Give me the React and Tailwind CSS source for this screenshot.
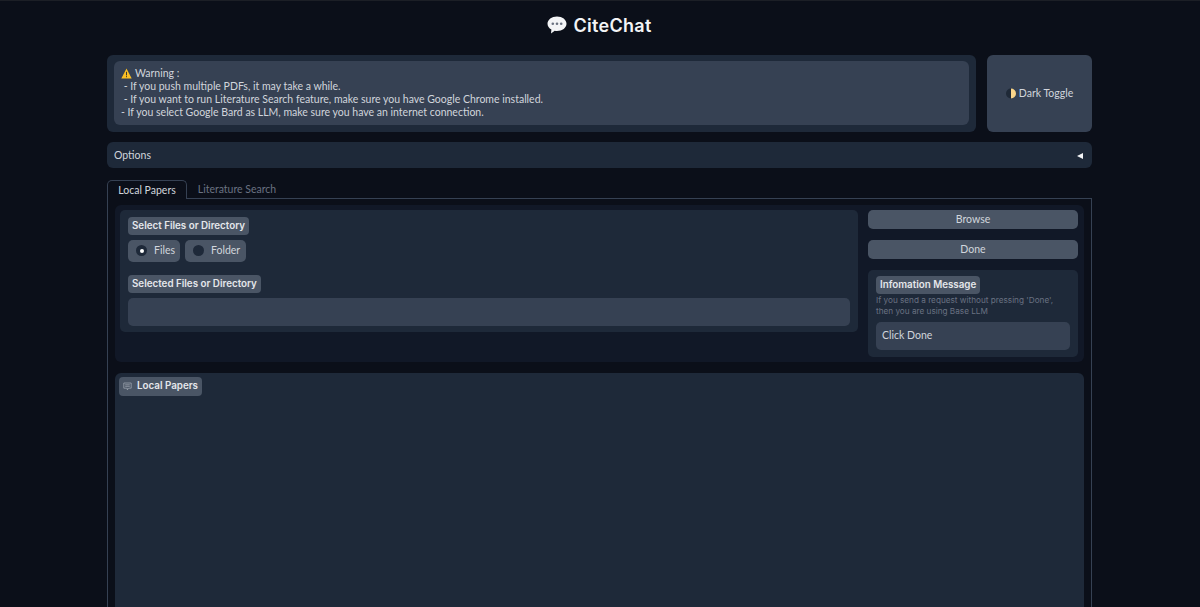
import React from 'react';

const BODY = "font-['Lato','Liberation_Sans',sans-serif]";
const HEAD = "font-['Inter','Liberation_Sans',sans-serif]";

const Balloon = () => (
  <svg width="20" height="18" viewBox="0 0 20 18">
    <path d="M10 .5c5.300 0 9.500 3.200 9.500 7.300s-4.200 7.200-9.500 7.200c-.8 0-1.600-.1-2.300-.2L4 17.500l.4-3.900C2 12.300.5 10.200.5 7.800.5 3.700 4.700.5 10 .5z" fill="#f3f4f6" />
    <circle cx="5.800" cy="7.800" r="1.300" fill="#6b7280" />
    <circle cx="10" cy="7.800" r="1.300" fill="#6b7280" />
    <circle cx="14.200" cy="7.800" r="1.300" fill="#6b7280" />
  </svg>
);

const WarnIcon = () => (
  <svg width="11" height="11" viewBox="0 0 11 11" className="shrink-0">
    <path d="M5.500.5l5.200 10H.3z" fill="#fbbf24" />
    <rect x="5" y="3.800" width="1" height="3.600" fill="#3f3a2a" />
    <rect x="5" y="8.100" width="1" height="1.100" fill="#3f3a2a" />
  </svg>
);

const MoonIcon = () => (
  <svg width="10" height="11" viewBox="0 0 10 11" className="shrink-0">
    <circle cx="5" cy="5.500" r="5" fill="#1f2937" />
    <path d="M5 .5a5 5 0 0 1 0 10z" fill="#fcd68a" />
  </svg>
);

const ChatIcon = () => (
  <svg width="9" height="9" viewBox="0 0 9 9" fill="none" stroke="#9ca3af" strokeWidth="0.800">
    <path d="M.8 1h7.400v5.200H5.500L4.300 8V6.200H.8z" />
    <path d="M2.200 2.800h4.600M2.200 4.300h4.600" />
  </svg>
);

const Label = ({ children, className = '' }) => (
  <div className={`flex w-fit items-center h-[18px] px-[4px] rounded-[4px] bg-gray-600 text-[9.8px] font-semibold text-gray-200 whitespace-nowrap ${HEAD} ${className}`}>
    {children}
  </div>
);

const Radio = ({ label, checked, width }) => (
  <div className={`flex items-center gap-[7px] h-[22px] pl-[8px] pb-px rounded-[5px] bg-gray-600 text-[10.5px] text-gray-300 ${width}`}>
    <span className="w-[11px] h-[11px] rounded-full bg-gray-800 flex items-center justify-center">
      {checked && <span className="w-[4px] h-[4px] rounded-full bg-white" />}
    </span>
    {label}
  </div>
);

const App = () => {
  return (
    <div className={`h-[607px] overflow-hidden bg-[#0b0f19] border-t border-[#1c1f26] ${BODY}`}>
      <div className="w-[985px] ml-[107px]">
        <h1 className={`h-[54px] flex items-center justify-center gap-[6px] text-[18px] font-semibold tracking-[0.3px] text-gray-100 pb-[6px] ${HEAD}`}>
          <Balloon /> CiteChat
        </h1>

        <div className="flex gap-[11px] h-[77px]">
          <div className="flex-1 rounded-[6px] bg-gray-800 pt-[6px] px-[7px] pb-[7px]">
            <div className="h-full rounded-[6px] bg-gray-700 px-[7px] py-[6px] text-[10.5px] leading-[13px] text-gray-300 whitespace-pre">
              <div className="flex items-center gap-[3px]"><WarnIcon />Warning :</div>
              <div> - If you push multiple PDFs, it may take a while.</div>
              <div> - If you want to run Literature Search feature, make sure you have Google Chrome installed.</div>
              <div>- If you select Google Bard as LLM, make sure you have an internet connection.</div>
            </div>
          </div>
          <div className="w-[105px] rounded-[6px] bg-gray-700 flex items-center justify-center gap-[3px] text-[10.5px] text-gray-300">
            <MoonIcon /> Dark Toggle
          </div>
        </div>

        <div className="mt-[10px] h-[26px] rounded-[6px] bg-gray-800 flex items-center justify-between pl-[7px] pr-[9px] pt-px text-[10.5px] text-gray-300">
          Options
          <span className="w-0 h-0 border-y-[3px] border-y-transparent border-r-[6px] border-r-gray-100" />
        </div>

        <div className="mt-[12px] flex h-[18px]">
          <div className="relative z-10 w-[80px] h-[19px] flex items-center justify-center rounded-t-[5px] border border-b-0 border-gray-700 bg-[#0b0f19] pt-px text-[10.5px] text-gray-300">Local Papers</div>
          <div className="w-[100px] flex items-center justify-center pt-px text-[10.5px] text-gray-500">Literature Search</div>
        </div>

        <div className="border border-gray-700 border-b-0 px-[7px] pt-[6px] h-[500px]">
          <div className="flex gap-[10px] h-[157px] rounded-[6px] bg-[#111827] p-[5px]">
            <div className="w-[738px] h-[122px] rounded-[5px] bg-gray-800 px-[8px] pt-[7px]">
              <Label>Select Files or Directory</Label>
              <div className="flex gap-[5px] mt-[5px]">
                <Radio label="Files" checked width="w-[52px]" />
                <Radio label="Folder" width="w-[61px]" />
              </div>
              <Label className="mt-[13px]">Selected Files or Directory</Label>
              <div className="mt-[5px] h-[28px] rounded-[5px] bg-gray-700" />
            </div>
            <div className="w-[210px] flex flex-col">
              <div className="h-[19px] rounded-[5px] bg-gray-600 flex items-center justify-center text-[10.5px] text-gray-300">Browse</div>
              <div className="mt-[11px] h-[19px] rounded-[5px] bg-gray-600 flex items-center justify-center text-[10.5px] text-gray-300">Done</div>
              <div className="mt-[11px] h-[87px] rounded-[5px] bg-gray-800 px-[8px] pt-[6px]">
                <Label>Infomation Message</Label>
                <p className={`mt-[1px] text-[8.2px] leading-[11px] text-gray-500 whitespace-nowrap ${HEAD}`}>If you send a request without pressing 'Done',<br />then you are using Base LLM</p>
                <div className="mt-[5px] h-[28px] rounded-[5px] bg-gray-700 flex items-center px-[6px] text-[10.5px] text-gray-300">Click Done</div>
              </div>
            </div>
          </div>
          <div className="mt-[11px] h-[300px] rounded-[6px] bg-gray-800 p-[4px]">
            <Label className="gap-[5px] px-[4px] h-[19px]"><ChatIcon /> Local Papers</Label>
          </div>
        </div>
      </div>
    </div>
  );
};

export default App;
